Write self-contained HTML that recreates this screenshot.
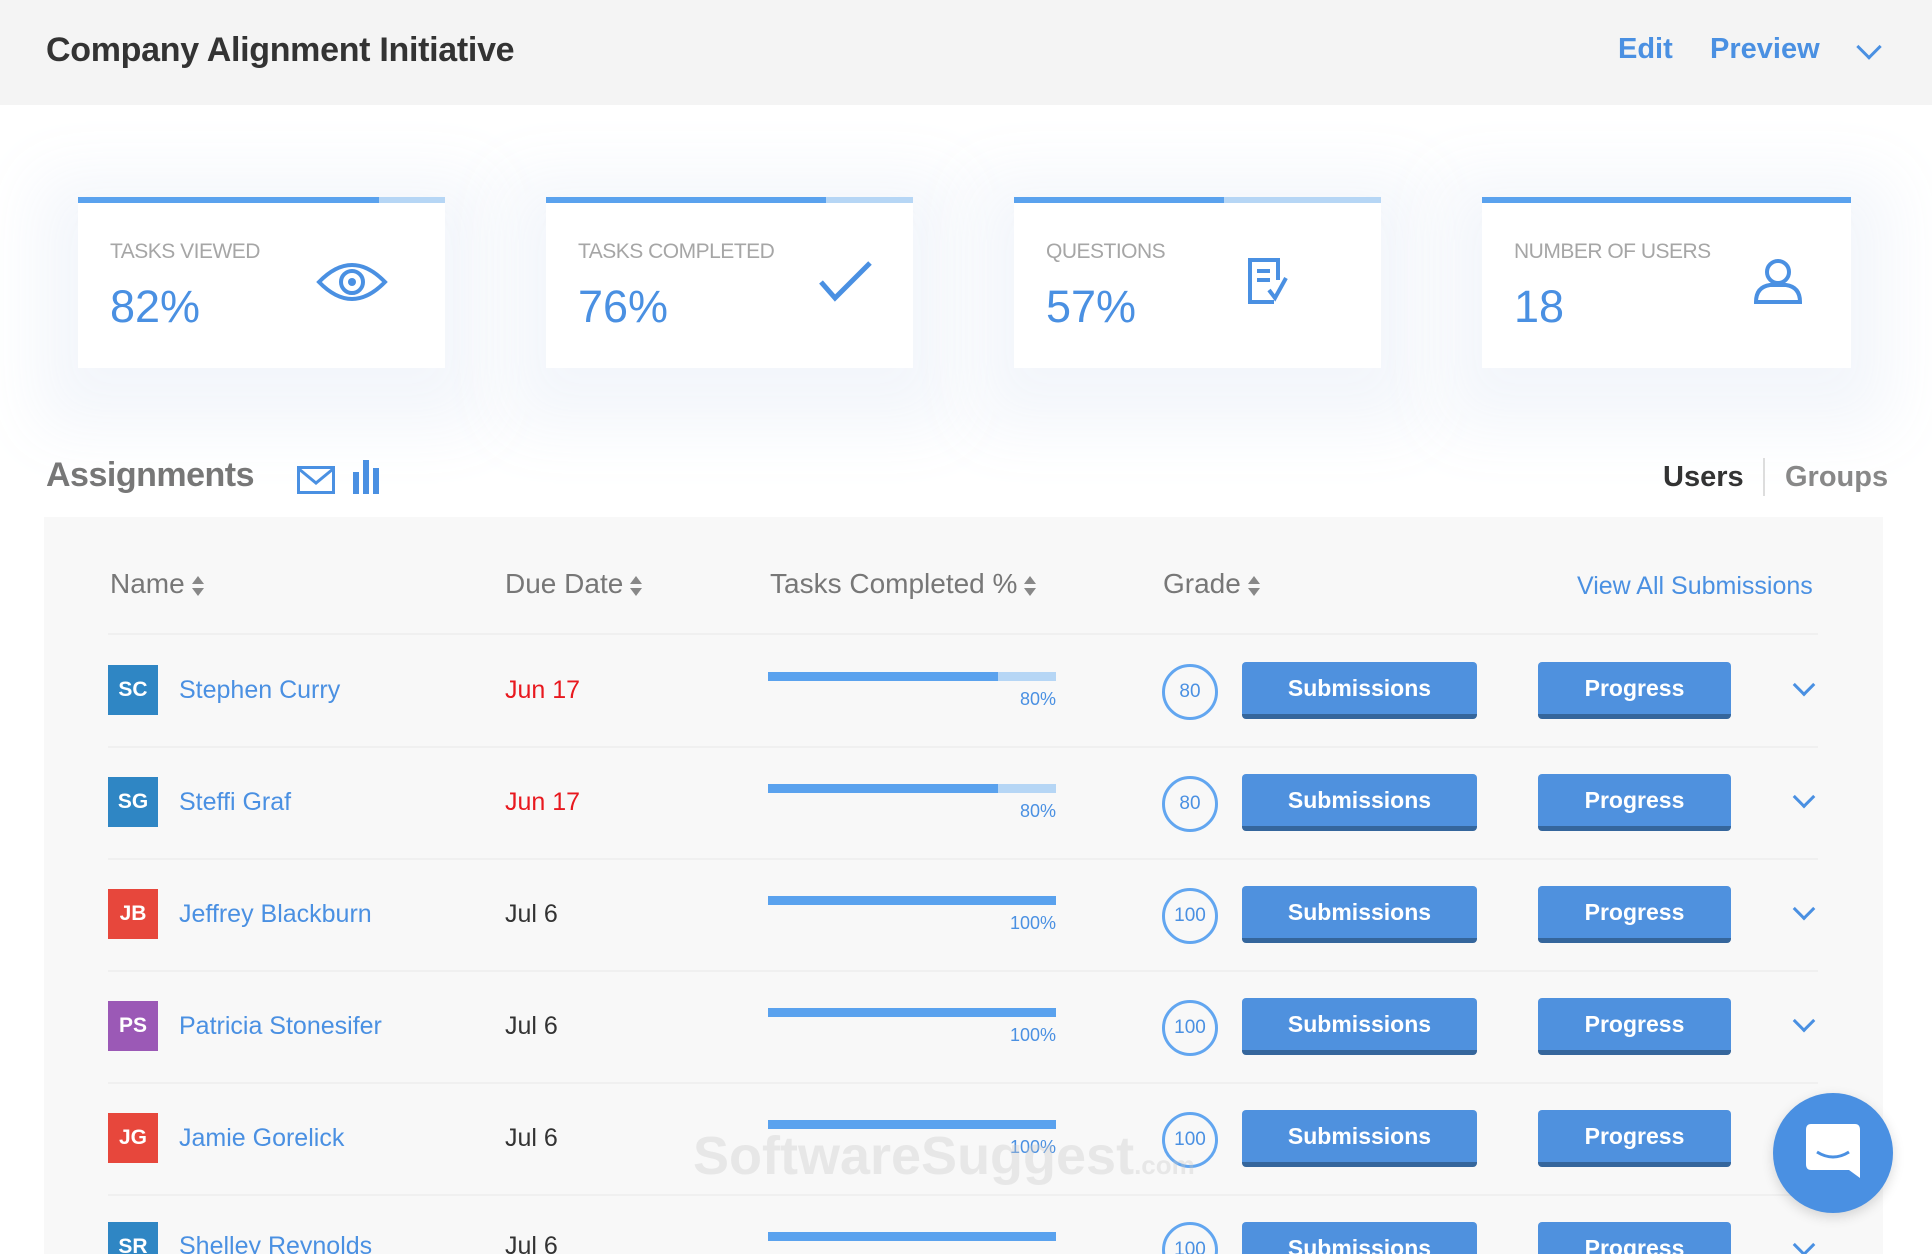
<!DOCTYPE html>
<html style="width:1932px;height:1254px;overflow:hidden"><head><meta charset="utf-8"><style>
*{margin:0;padding:0;box-sizing:border-box}
body{width:1932px;height:1254px;overflow:hidden;background:#fff;font-family:"Liberation Sans",sans-serif;position:relative}
.a{position:absolute}
.hdr{left:0;top:0;width:1932px;height:105px;background:#f4f4f4}
.card{background:#fff;box-shadow:0 20px 60px 40px rgba(242,245,251,.95),0 10px 20px rgba(0,0,0,.04)}
.bar{height:6px;background:#b6d6f5;position:absolute;left:0;top:0;right:0}
.bar i{display:block;height:6px;background:#5aa2ee}
.lbl{font-size:21px;color:#a6a6a6;letter-spacing:-.5px}
.val{font-size:45px;color:#4a90e2}
.th{font-size:28px;color:#777;top:568px}
.srt{display:inline-block;vertical-align:middle;margin-left:6px}
.row{left:108px;width:1710px;height:2px;background:#f0f0f0}
.av{width:50px;height:50px;color:#fff;font-weight:bold;font-size:21px;text-align:center;line-height:50px}
.nm{font-size:25px;color:#4a90e2}
.dt{font-size:25px;color:#333}
.pb{width:288px;height:9px;background:#b6d6f5}
.pb i{display:block;height:9px;background:#5aa2ee}
.pc{font-size:18px;color:#4a90e2;width:288px;text-align:right}
.gr{width:56px;height:56px;border-radius:50%;border:3px solid #62a6f0;color:#4a90e2;font-size:19px;text-align:center;line-height:50px}
.btn{height:57px;background:#4f91de;border-bottom:5px solid #35669c;border-radius:4px;color:#fff;font-size:23px;text-align:center;line-height:52px;font-weight:bold}
.chev{width:18px;height:18px;border-right:3px solid #4a90e2;border-bottom:3px solid #4a90e2;transform:rotate(45deg)}
</style></head><body>
<div class="a hdr"></div>
<div class="a" style="left:46px;top:31px;font-size:34px;font-weight:bold;color:#333;letter-spacing:-.3px">Company Alignment Initiative</div>
<div class="a" style="left:1618px;top:33px;font-size:29px;font-weight:bold;color:#4a90e2">Edit</div>
<div class="a" style="left:1710px;top:33px;font-size:29px;font-weight:bold;color:#4a90e2">Preview</div>
<div class="a chev" style="left:1860px;top:38px"></div>

<div class="a card" style="left:78px;top:197px;width:367px;height:171px"><div class="bar"><i style="width:301px"></i></div></div>
<div class="a card" style="left:546px;top:197px;width:367px;height:171px"><div class="bar"><i style="width:280px"></i></div></div>
<div class="a card" style="left:1014px;top:197px;width:367px;height:171px"><div class="bar"><i style="width:210px"></i></div></div>
<div class="a card" style="left:1482px;top:197px;width:369px;height:171px"><div class="bar"><i style="width:369px"></i></div></div>

<div class="a lbl" style="left:110px;top:240px">TASKS VIEWED</div>
<div class="a val" style="left:110px;top:281px">82%</div>
<svg class="a" style="left:316px;top:260px" width="72" height="44" viewBox="0 0 72 44"><path d="M3 22 Q36 -12 69 22 Q36 56 3 22Z" fill="none" stroke="#4a90e2" stroke-width="4"/><circle cx="36" cy="22" r="11" fill="none" stroke="#4a90e2" stroke-width="4"/><circle cx="36" cy="22" r="4" fill="#4a90e2"/></svg>

<div class="a lbl" style="left:578px;top:240px">TASKS COMPLETED</div>
<div class="a val" style="left:578px;top:281px">76%</div>
<svg class="a" style="left:818px;top:260px" width="56" height="42" viewBox="0 0 56 42"><path d="M3 22 L17 38 L52 3" fill="none" stroke="#4a90e2" stroke-width="5"/></svg>

<div class="a lbl" style="left:1046px;top:240px">QUESTIONS</div>
<div class="a val" style="left:1046px;top:281px">57%</div>
<svg class="a" style="left:1246px;top:256px" width="52" height="52" viewBox="0 0 52 52"><path d="M28 46 H4 V4 H32 V24" fill="none" stroke="#4a90e2" stroke-width="4"/><path d="M11 15 H24 M11 24 H24" stroke="#4a90e2" stroke-width="4"/><path d="M23 34 L29 42 L40 22" fill="none" stroke="#4a90e2" stroke-width="4"/></svg>

<div class="a lbl" style="left:1514px;top:240px">NUMBER OF USERS</div>
<div class="a val" style="left:1514px;top:281px">18</div>
<svg class="a" style="left:1752px;top:258px" width="52" height="48" viewBox="0 0 52 48"><circle cx="26" cy="14" r="11" fill="none" stroke="#4a90e2" stroke-width="4"/><path d="M4 44 Q4 29 18 27 H34 Q48 29 48 44 Z" fill="none" stroke="#4a90e2" stroke-width="4"/></svg>

<div class="a" style="left:46px;top:456px;font-size:34px;font-weight:bold;color:#777;letter-spacing:-.5px">Assignments</div>
<svg class="a" style="left:297px;top:466px" width="38" height="28" viewBox="0 0 38 28"><rect x="1.5" y="1.5" width="35" height="25" fill="none" stroke="#4a90e2" stroke-width="3"/><path d="M2 3 L19 17 L36 3" fill="none" stroke="#4a90e2" stroke-width="3"/></svg>
<svg class="a" style="left:353px;top:460px" width="26" height="34" viewBox="0 0 26 34"><rect x="0" y="12" width="6" height="22" fill="#4a90e2"/><rect x="10" y="0" width="6" height="34" fill="#4a90e2"/><rect x="20" y="8" width="6" height="26" fill="#4a90e2"/></svg>
<div class="a" style="left:1663px;top:461px;font-size:29px;font-weight:bold;color:#333">Users</div>
<div class="a" style="left:1763px;top:458px;width:2px;height:38px;background:#ddd"></div>
<div class="a" style="left:1785px;top:461px;font-size:29px;font-weight:bold;color:#888">Groups</div>

<div class="a" style="left:44px;top:517px;width:1839px;height:737px;background:#f8f8f8"></div>
<svg width="0" height="0" style="position:absolute"><defs><symbol id="s" viewBox="0 0 14 22"><path d="M7 1 L13 9 H1Z M7 21 L13 13 H1Z" fill="#888"/></symbol></defs></svg>
<div class="a th" style="left:110px">Name<svg class="srt" width="14" height="22"><use href="#s"/></svg></div>
<div class="a th" style="left:505px">Due Date<svg class="srt" width="14" height="22"><use href="#s"/></svg></div>
<div class="a th" style="left:770px">Tasks Completed %<svg class="srt" width="14" height="22"><use href="#s"/></svg></div>
<div class="a th" style="left:1163px">Grade<svg class="srt" width="14" height="22"><use href="#s"/></svg></div>
<div class="a" style="left:1577px;top:572px;font-size:25px;color:#4a90e2">View All Submissions</div>

<div class="a row" style="top:633px"></div>
<div class="a row" style="top:746px"></div>
<div class="a row" style="top:858px"></div>
<div class="a row" style="top:970px"></div>
<div class="a row" style="top:1082px"></div>
<div class="a row" style="top:1194px"></div>

<div class="a av" style="left:108px;top:665px;background:#2f86c4">SC</div>
<div class="a nm" style="left:179px;top:676px">Stephen Curry</div>
<div class="a dt" style="left:505px;top:676px;color:#e8191f">Jun 17</div>
<div class="a pb" style="left:768px;top:672px"><i style="width:230px"></i></div>
<div class="a pc" style="left:768px;top:689px">80%</div>
<div class="a gr" style="left:1162px;top:664px">80</div>
<div class="a btn" style="left:1242px;top:662px;width:235px">Submissions</div>
<div class="a btn" style="left:1538px;top:662px;width:193px">Progress</div>
<div class="a chev" style="left:1796px;top:677px;width:16px;height:16px"></div>

<div class="a av" style="left:108px;top:777px;background:#2f86c4">SG</div>
<div class="a nm" style="left:179px;top:788px">Steffi Graf</div>
<div class="a dt" style="left:505px;top:788px;color:#e8191f">Jun 17</div>
<div class="a pb" style="left:768px;top:784px"><i style="width:230px"></i></div>
<div class="a pc" style="left:768px;top:801px">80%</div>
<div class="a gr" style="left:1162px;top:776px">80</div>
<div class="a btn" style="left:1242px;top:774px;width:235px">Submissions</div>
<div class="a btn" style="left:1538px;top:774px;width:193px">Progress</div>
<div class="a chev" style="left:1796px;top:789px;width:16px;height:16px"></div>

<div class="a av" style="left:108px;top:889px;background:#e7473c">JB</div>
<div class="a nm" style="left:179px;top:900px">Jeffrey Blackburn</div>
<div class="a dt" style="left:505px;top:900px">Jul 6</div>
<div class="a pb" style="left:768px;top:896px"><i style="width:288px"></i></div>
<div class="a pc" style="left:768px;top:913px">100%</div>
<div class="a gr" style="left:1162px;top:888px">100</div>
<div class="a btn" style="left:1242px;top:886px;width:235px">Submissions</div>
<div class="a btn" style="left:1538px;top:886px;width:193px">Progress</div>
<div class="a chev" style="left:1796px;top:901px;width:16px;height:16px"></div>

<div class="a av" style="left:108px;top:1001px;background:#9b59b6">PS</div>
<div class="a nm" style="left:179px;top:1012px">Patricia Stonesifer</div>
<div class="a dt" style="left:505px;top:1012px">Jul 6</div>
<div class="a pb" style="left:768px;top:1008px"><i style="width:288px"></i></div>
<div class="a pc" style="left:768px;top:1025px">100%</div>
<div class="a gr" style="left:1162px;top:1000px">100</div>
<div class="a btn" style="left:1242px;top:998px;width:235px">Submissions</div>
<div class="a btn" style="left:1538px;top:998px;width:193px">Progress</div>
<div class="a chev" style="left:1796px;top:1013px;width:16px;height:16px"></div>

<div class="a av" style="left:108px;top:1113px;background:#e7473c">JG</div>
<div class="a nm" style="left:179px;top:1124px">Jamie Gorelick</div>
<div class="a dt" style="left:505px;top:1124px">Jul 6</div>
<div class="a pb" style="left:768px;top:1120px"><i style="width:288px"></i></div>
<div class="a pc" style="left:768px;top:1137px">100%</div>
<div class="a gr" style="left:1162px;top:1112px">100</div>
<div class="a btn" style="left:1242px;top:1110px;width:235px">Submissions</div>
<div class="a btn" style="left:1538px;top:1110px;width:193px">Progress</div>

<div class="a av" style="left:108px;top:1222px;background:#2f86c4">SR</div>
<div class="a nm" style="left:179px;top:1232px">Shelley Reynolds</div>
<div class="a dt" style="left:505px;top:1232px">Jul 6</div>
<div class="a pb" style="left:768px;top:1232px"><i style="width:288px"></i></div>
<div class="a gr" style="left:1162px;top:1222px">100</div>
<div class="a btn" style="left:1242px;top:1222px;width:235px">Submissions</div>
<div class="a btn" style="left:1538px;top:1222px;width:193px">Progress</div>
<div class="a chev" style="left:1796px;top:1237px;width:16px;height:16px"></div>

<div class="a" style="left:693px;top:1125px;font-size:54px;font-weight:bold;color:rgba(200,200,200,.35)">SoftwareSuggest<span style="font-size:26px">.com</span></div>

<div class="a" style="left:1773px;top:1093px;width:120px;height:120px;border-radius:50%;background:#4a90e2;box-shadow:0 4px 12px rgba(0,0,0,.15)"></div>
<svg class="a" style="left:1803px;top:1122px" width="60" height="60" viewBox="0 0 60 60"><path d="M8 2 H52 Q57 2 57 8 V56 L46 48 H8 Q3 48 3 42 V8 Q3 2 8 2Z" fill="#fff"/><path d="M14 30 Q30 40 46 30" fill="none" stroke="#4a90e2" stroke-width="3"/></svg>
</body></html>
